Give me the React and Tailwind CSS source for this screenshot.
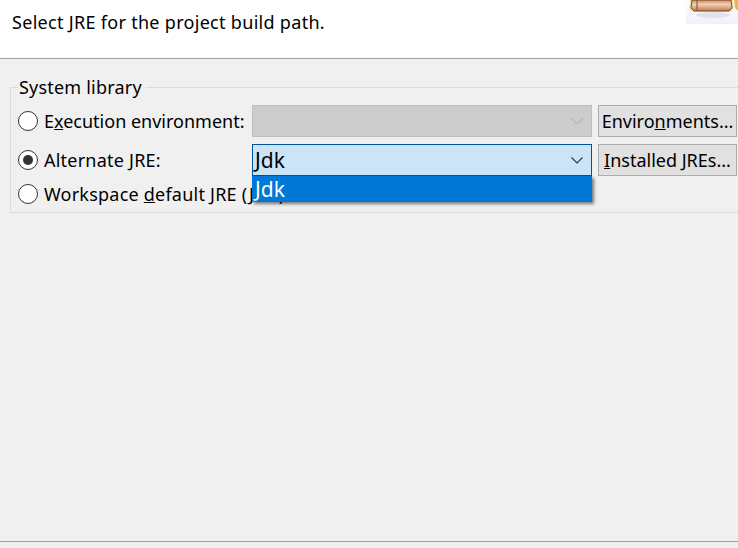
const font = "font-['Noto_Sans','Open_Sans',sans-serif]";

function Radio({ checked }) {
  return (
    <span className="flex h-[20px] w-[20px] shrink-0 items-center justify-center rounded-full border border-[#333333] bg-white">
      {checked && <span className="h-[10px] w-[10px] rounded-full bg-[#333333]" />}
    </span>
  );
}

function Chevron({ color }) {
  return (
    <svg width="12" height="7" viewBox="0 0 12 7" fill="none">
      <path d="M0.5 0.5L6 6L11.5 0.5" stroke={color} strokeWidth="1.1" />
    </svg>
  );
}

function Option({ checked, children, wide }) {
  return (
    <div className="flex items-center gap-[6px] whitespace-nowrap">
      <Radio checked={checked} />
      <span className={wide ? "tracking-[0.22px]" : ""}>{children}</span>
    </div>
  );
}

function Btn({ children }) {
  return (
    <div className="flex h-[32px] w-[139px] items-center justify-center whitespace-nowrap border border-[#adadad] bg-[#e1e1e1]">
      {children}
    </div>
  );
}

export default function App() {
  return (
    <div className={`flex h-[548px] w-[738px] flex-col overflow-hidden bg-[#f0f0f0] text-[18px] leading-[24px] text-black ${font}`}>
      <header className="relative h-[59px] shrink-0 border-b border-[#a0a0a0] bg-white pl-[12px] pt-[10px]">
        <p className="tracking-[0.3px]">Select JRE for the project build path.</p>
        <svg className="absolute right-0 top-0" width="52" height="24" viewBox="0 0 52 24">
          <defs>
            <linearGradient id="bg" x1="0" y1="0" x2="0" y2="1">
              <stop offset="0" stopColor="#ffffff" />
              <stop offset="1" stopColor="#eef1fb" />
            </linearGradient>
            <linearGradient id="roll" x1="0" y1="0" x2="0" y2="1">
              <stop offset="0" stopColor="#c98a5e" />
              <stop offset="0.4" stopColor="#f0d0b4" />
              <stop offset="1" stopColor="#c07a4c" />
            </linearGradient>
          </defs>
          <rect width="52" height="24" fill="url(#bg)" />
          <ellipse cx="27" cy="15" rx="17" ry="3" fill="#e2e2ea" />
          <path d="M4 0H47L48 9L45 12H7L3 9Z" fill="#f7e3a8" />
          <path d="M6 0H45L46 8L43 11H8L5 8Z" fill="url(#roll)" stroke="#7e4a26" />
          <path d="M11 0V10" stroke="#7e4a26" />
          <path d="M48 0H52V11L49 8Z" fill="#eeb45c" />
        </svg>
      </header>

      <fieldset className="ml-[10px] mt-[16px] h-[138px] w-[760px] shrink-0 border border-[#dcdcdc] pl-[7px]">
        <legend className="px-[1px] pr-[4px] tracking-[0.2px]">System library</legend>
        <div className="mt-[6px] grid grid-cols-[228px_340px_139px] grid-rows-[32px_32px_22px] gap-x-[6px] gap-y-[7px]">
          <div className="flex items-center">
            <Option>
              E<u>x</u>ecution environment:
            </Option>
          </div>
          <div className="flex items-center justify-end border border-[#bfbfbf] bg-[#cccccc] pr-[8px]">
            <Chevron color="#b4b4b4" />
          </div>
          <Btn>
            Enviro<u>n</u>ments...
          </Btn>

          <div className="flex items-center">
            <Option checked wide>
              Alternate <u>J</u>RE:
            </Option>
          </div>
          <div className="relative flex items-center justify-between border border-[#005499] bg-[#cce4f7] pl-[2px] pr-[8px] text-[21px]">
            <span>Jdk</span>
            <Chevron color="#333333" />
            <div className="absolute left-[-1px] right-[-1px] top-[31px] z-10 h-[26px] bg-[#0078d7] pl-[3px] pt-[1px] text-white shadow-[2px_2px_3px_rgba(0,0,0,0.5)]">
              Jdk
            </div>
          </div>
          <Btn>
            <u>I</u>nstalled JREs...
          </Btn>

          <div className="col-span-3 flex items-center">
            <Option wide>
              Workspace <u>d</u>efault JRE (JDK)
            </Option>
          </div>
        </div>
      </fieldset>

      <div className="flex-1" />
      <div className="h-[7px] shrink-0 border-t border-[#a0a0a0]" />
    </div>
  );
}
